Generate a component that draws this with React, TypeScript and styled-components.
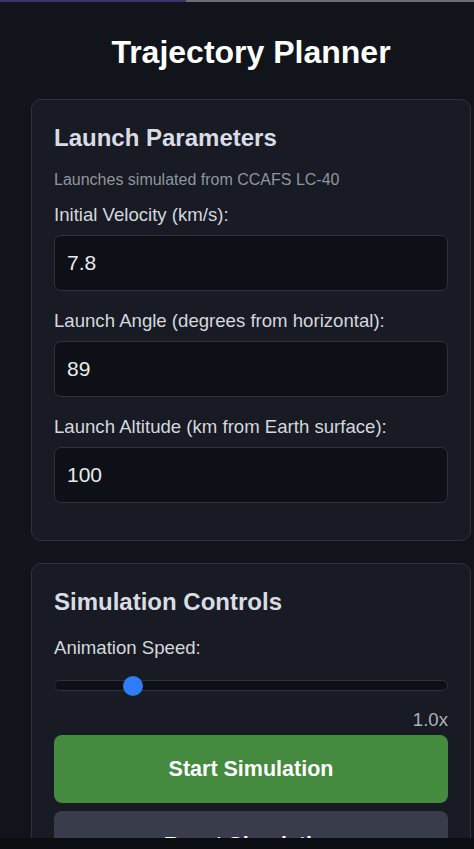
import { FC, useState } from "react";
import styled, { createGlobalStyle } from "styled-components";

const GlobalStyle = createGlobalStyle`
  html, body {
    margin: 0;
    padding: 0;
    background: #0b0e13;
  }

  body {
    font-family: "Liberation Sans", Arial, Helvetica, sans-serif;
    color: #d4d7dd;
    overflow: hidden;
  }

  * {
    box-sizing: border-box;
  }
`;

const Page = styled.div`
  display: flex;
  flex-direction: column;
  height: 849px;
  width: 474px;
`;

const LoadBar = styled.div`
  display: flex;
  height: 2px;
  flex: 0 0 auto;
  background: #6b6e75;
`;

const LoadBarFill = styled.div<{ $width: number }>`
  width: ${(props) => props.$width}px;
  background: #36366c;
`;

const Sidebar = styled.aside`
  flex: 0 0 836px;
  overflow: hidden;
  background: #11141a;
  padding: 0 3px 0 31px;
`;

const BottomStrip = styled.div`
  flex: 1 0 auto;
  background: #0b0e13;
`;

const PageTitle = styled.h1`
  margin: 32px 0 28px;
  font-size: 32px;
  font-weight: 700;
  line-height: normal;
  text-align: center;
  color: #ffffff;
`;

const Panel = styled.section`
  background: #181b23;
  border: 1px solid #2d323b;
  border-radius: 10px;
  padding: 24px 22px 18px;

  & + & {
    margin-top: 22px;
  }
`;

const PanelTitle = styled.h2`
  margin: 0 0 21px;
  font-size: 24px;
  font-weight: 700;
  line-height: normal;
  color: #d9dce4;
`;

const Note = styled.p`
  margin: -2px 0 15px;
  font-size: 16px;
  line-height: normal;
  color: #8f959e;
`;

const FieldGroup = styled.div`
  display: flex;
  flex-direction: column;
  margin-bottom: 19px;
`;

const FieldLabel = styled.label<{ $tight?: boolean }>`
  display: block;
  margin-bottom: ${(props) => (props.$tight ? "0" : "9px")};
  font-size: 18.6px;
  line-height: normal;
  color: #d4d7dd;
`;

const NumberInput = styled.input`
  height: 56px;
  width: 100%;
  padding: 0 12px;
  border: 1px solid #2d323b;
  border-radius: 7px;
  background: #0d1016;
  color: #e8eaee;
  font-family: inherit;
  font-size: 21px;
  outline: none;
`;

const SpeedSlider = styled.input`
  -webkit-appearance: none;
  appearance: none;
  display: block;
  width: 100%;
  height: 11px;
  margin: 21px 0 0;
  border: 1px solid #2d323b;
  border-radius: 6px;
  background: #0d1016;
  outline: none;

  &::-webkit-slider-thumb {
    -webkit-appearance: none;
    appearance: none;
    width: 20px;
    height: 20px;
    border-radius: 50%;
    background: #2f7cf6;
    border: none;
    cursor: pointer;
  }
`;

const SpeedValue = styled.div`
  margin-top: 18px;
  font-size: 18.6px;
  line-height: normal;
  text-align: right;
  color: #aeb2b9;
`;

const ActionButton = styled.button<{ $variant: "start" | "reset" }>`
  display: block;
  width: 100%;
  height: 68px;
  margin-top: ${(props) => (props.$variant === "start" ? "4px" : "8px")};
  border: none;
  border-radius: 8px;
  background: ${(props) => (props.$variant === "start" ? "#448a3f" : "#393d4b")};
  color: #ffffff;
  font-family: inherit;
  font-size: 21.5px;
  font-weight: 700;
  cursor: pointer;
`;

interface FieldProps {
  id: string;
  label: string;
  value: string;
  onChange: (value: string) => void;
}

const Field: FC<FieldProps> = ({ id, label, value, onChange }) => (
  <FieldGroup>
    <FieldLabel htmlFor={id}>{label}</FieldLabel>
    <NumberInput
      id={id}
      type="number"
      value={value}
      onChange={(e) => onChange(e.target.value)}
    />
  </FieldGroup>
);

const App: FC = () => {
  const [velocity, setVelocity] = useState("7.8");
  const [angle, setAngle] = useState("89");
  const [altitude, setAltitude] = useState("100");
  const [speed, setSpeed] = useState(1);

  return (
    <>
      <GlobalStyle />
      <Page>
        <LoadBar>
          <LoadBarFill $width={186} />
        </LoadBar>
        <Sidebar>
          <PageTitle>Trajectory Planner</PageTitle>

          <Panel>
            <PanelTitle>Launch Parameters</PanelTitle>
            <Note>Launches simulated from CCAFS LC-40</Note>
            <Field
              id="velocity"
              label="Initial Velocity (km/s):"
              value={velocity}
              onChange={setVelocity}
            />
            <Field
              id="angle"
              label="Launch Angle (degrees from horizontal):"
              value={angle}
              onChange={setAngle}
            />
            <Field
              id="altitude"
              label="Launch Altitude (km from Earth surface):"
              value={altitude}
              onChange={setAltitude}
            />
          </Panel>

          <Panel>
            <PanelTitle>Simulation Controls</PanelTitle>
            <FieldLabel htmlFor="speed" $tight>
              Animation Speed:
            </FieldLabel>
            <SpeedSlider
              id="speed"
              type="range"
              min={0.1}
              max={5}
              step={0.1}
              value={speed}
              onChange={(e) => setSpeed(parseFloat(e.target.value))}
            />
            <SpeedValue>{speed.toFixed(1)}x</SpeedValue>
            <ActionButton $variant="start">Start Simulation</ActionButton>
            <ActionButton $variant="reset">Reset Simulation</ActionButton>
          </Panel>
        </Sidebar>
        <BottomStrip />
      </Page>
    </>
  );
};

export default App;
